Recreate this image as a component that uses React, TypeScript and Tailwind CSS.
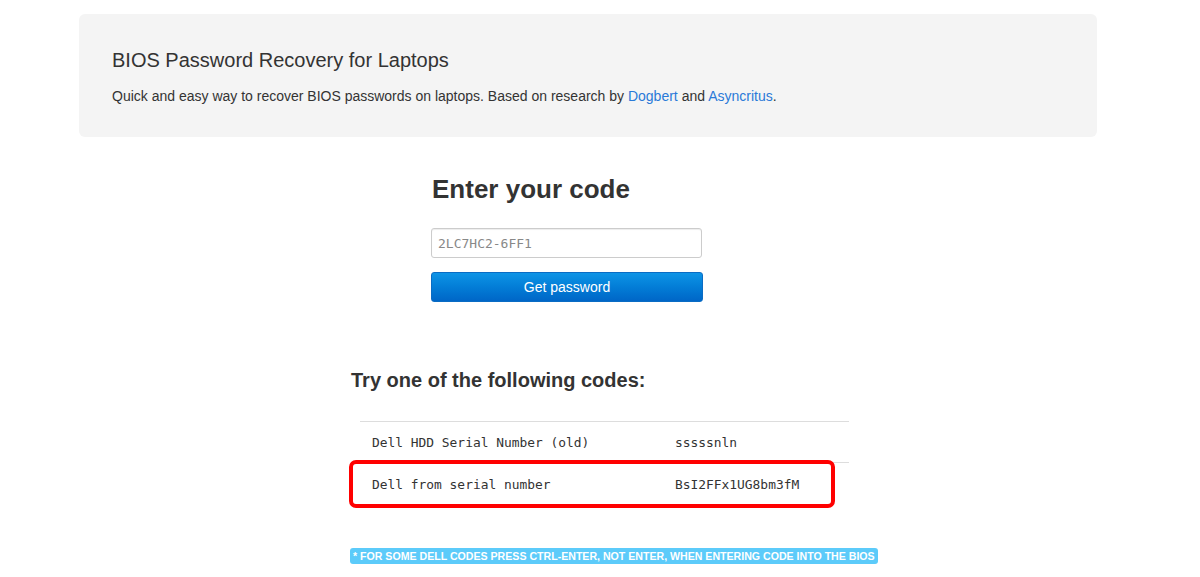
const codes = [
  { type: "Dell HDD Serial Number (old)", code: "sssssnln" },
  { type: "Dell from serial number", code: "BsI2FFx1UG8bm3fM" },
];

export default function App() {
  return (
    <div className="min-h-[577px] bg-white pt-[14px] font-['Liberation_Sans',Arial,sans-serif] text-[#333]">
      <div className="ml-[79px] h-[123px] w-[1018px] rounded-md bg-[#f4f4f4] px-[33px] pt-[35px]">
        <h1 className="text-[20px] leading-[22px] text-[#333]">BIOS Password Recovery for Laptops</h1>
        <p className="mt-[15px] text-[14px] leading-[20px] text-[#333]">
          Quick and easy way to recover BIOS passwords on laptops. Based on research by{" "}
          <a href="#" className="text-[#2a7ad8]">Dogbert</a> and{" "}
          <a href="#" className="text-[#2a7ad8]">Asyncritus</a>.
        </p>
      </div>

      <div className="ml-[431px] mt-[38px] w-[272px]">
        <h2 className="pl-[1px] text-[26px] font-bold leading-[28px] text-[#333]">Enter your code</h2>
        <input
          readOnly
          value="2LC7HC2-6FF1"
          className="mt-[25px] block h-[30px] w-[271px] rounded-[3px] border border-[#ccc] bg-white px-[6px] font-['DejaVu_Sans_Mono',monospace] text-[13px] text-[#888] shadow-[inset_0_1px_1px_rgba(0,0,0,0.075)] outline-none"
        />
        <button className="mt-[14px] block h-[30px] w-[272px] rounded-[3px] border border-[#0a6cc4] bg-gradient-to-b from-[#0e94e6] to-[#0066c7] text-[14px] text-white">
          Get password
        </button>
      </div>

      <div className="ml-[351px] mt-[67px]">
        <h3 className="text-[20px] font-bold leading-[22px] text-[#333]">Try one of the following codes:</h3>
        <div className="relative ml-[9px] mt-[30px] w-[489px]">
          <table className="w-full border-collapse font-['DejaVu_Sans_Mono',monospace] text-[12.9px] text-[#333]">
            <tbody>
              {codes.map((row) => (
                <tr key={row.code} className="h-[41px] border-t border-[#ddd]">
                  <td className="w-[315px] pl-[12px] pt-[2px]">{row.type}</td>
                  <td className="pt-[2px]">{row.code}</td>
                </tr>
              ))}
            </tbody>
          </table>
          <div className="absolute left-[-11px] top-[39px] h-[48px] w-[486px] rounded-[7px] border-[4px] border-[#f00]" />
        </div>
      </div>

      <div className="ml-[350px] mt-[44px] inline-block h-[16px] rounded-[3px] bg-[#5ccbfa] px-[3px] text-[10.6px] font-bold leading-[16px] text-white">
        * FOR SOME DELL CODES PRESS CTRL-ENTER, NOT ENTER, WHEN ENTERING CODE INTO THE BIOS
      </div>
    </div>
  );
}
